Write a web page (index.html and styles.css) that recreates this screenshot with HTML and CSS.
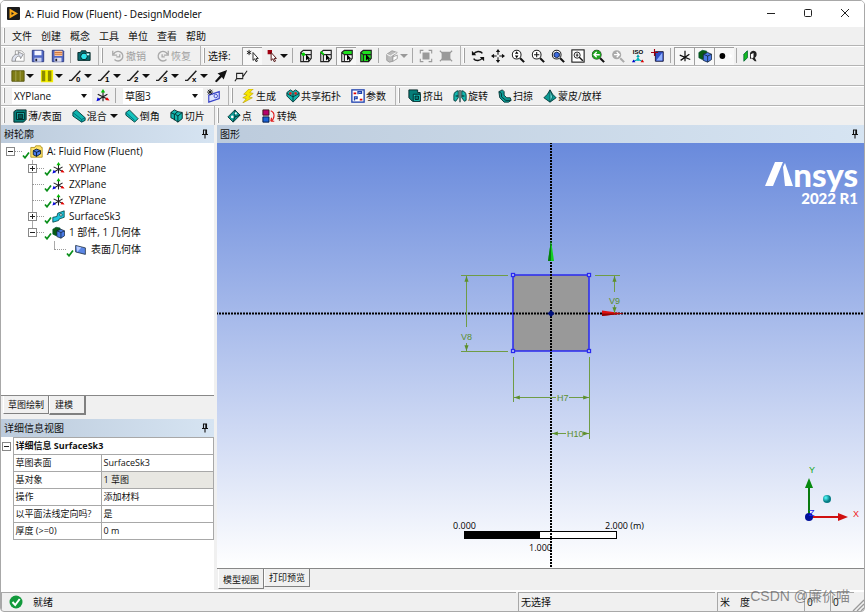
FILE: index.html
```
<!DOCTYPE html>
<html lang="zh-CN">
<head>
    <meta charset="UTF-8">
    <meta name="viewport" content="width=device-width, initial-scale=1.0">
    <title>A: Fluid Flow (Fluent) - DesignModeler</title>
    <link rel="stylesheet" href="styles.css">
</head>
<body>
    <!-- Shared icons -->
    <svg class="sprite" aria-hidden="true">
        <symbol id="i-cube" viewBox="0 0 16 16">
            <path d="M2 4l3-2.500h9v9L11 14.500H2zM2 4l3 2.500V14.500M5 6.500h9" fill="none" stroke="#222" stroke-width="1.300"/>
            <path d="M8 6l0 7 1.800-1.500 1.200 2.500 1-.5-1.200-2.500H13z" fill="#000"/>
        </symbol>
        <symbol id="i-line" viewBox="0 0 16 16">
            <path d="M0 13h3L13 2" fill="none" stroke="#222" stroke-width="1.700"/>
        </symbol>
        <symbol id="i-mag" viewBox="0 0 16 16">
            <circle cx="6.500" cy="6.500" r="5" fill="#fff" stroke="#222" stroke-width="1.200"/>
            <path d="M10.500 10.500L15 15" stroke="#111" stroke-width="2.400"/>
        </symbol>
        <symbol id="i-axes" viewBox="0 0 16 16">
            <path d="M8 14V3M2 6l12 6M13 6L3 12" stroke="#222" stroke-width="1.300"/>
            <path d="M8 0l2.500 4h-5z" fill="#0b0"/>
            <path d="M15.500 13l-5-.5 2-3z" fill="#e00"/>
            <path d="M.5 14l1.500-4.500 3 3z" fill="#00d"/>
        </symbol>
        <symbol id="i-blocks" viewBox="0 0 16 16">
            <path d="M1 4l4-2.500 5 1v7L5 12 1 10z" fill="#0a5c14" stroke="#053" stroke-width=".8"/>
            <path d="M6 6l5-2 4.500 2v6L11 15l-5-2z" fill="#4a7be8" stroke="#123" stroke-width=".9"/>
            <path d="M6 6l5 2v7M11 8l4.500-2" fill="none" stroke="#123" stroke-width=".9"/>
        </symbol>
        <symbol id="i-check" viewBox="0 0 8 8">
            <path d="M1 4.500l2 2.300L7 1.500" fill="none" stroke="#0a8f1a" stroke-width="1.700"/>
        </symbol>
        <symbol id="i-pin" viewBox="0 0 8 10">
            <path d="M2.500 1h3v4.500h-3zM1 5.500h6M4 6v3.500" fill="none" stroke="#111" stroke-width="1.100"/>
            <path d="M5 1v4.500" stroke="#111" stroke-width="1.400"/>
        </symbol>
    </svg>

    <div class="window">
        <header class="titlebar">
            <svg class="app-icon" viewBox="0 0 13 13"><rect width="13" height="13" rx="1" fill="#1b1b1b"/><path d="M2.500 1.500l8.500 5-8.500 5z" fill="#f7a81b"/><path d="M4.500 5l2.500 1.500L4.500 8z" fill="#1b1b1b"/></svg>
            <h1>A: Fluid Flow (Fluent) - DesignModeler</h1>
            <div class="window-buttons">
                <button type="button" aria-label="最小化"><svg viewBox="0 0 10 10"><path d="M1 5.500h8"/></svg></button>
                <button type="button" aria-label="最大化"><svg viewBox="0 0 10 10"><rect x="1.500" y="1.500" width="7" height="7" rx="1"/></svg></button>
                <button type="button" aria-label="关闭"><svg viewBox="0 0 10 10"><path d="M1 1l8 8M9 1L1 9"/></svg></button>
            </div>
        </header>

        <nav class="bar menu">
            <span class="grip"></span>
            <button type="button">文件</button>
            <button type="button">创建</button>
            <button type="button">概念</button>
            <button type="button">工具</button>
            <button type="button">单位</button>
            <button type="button">查看</button>
            <button type="button">帮助</button>
        </nav>

        <div class="bar">
            <div class="group">
                <span class="grip"></span>
                <button type="button" class="tool" aria-label="新建"><svg viewBox="0 0 16 16"><path d="M5 2h7l3 3v9H5z" fill="#fff" stroke="#999"/><path d="M1 14C1 9 4 5 9 6L8 3l6 3-3 5-1-3c-4 0-5 3-5 6z" fill="#dfe3ee" stroke="#777" stroke-width=".8"/></svg></button>
                <button type="button" class="tool" aria-label="保存"><svg viewBox="0 0 16 16"><path d="M1.500 1.500h12l1 1v12h-13z" fill="#5068c4" stroke="#28367e"/><path d="M4 2h8v5H4z" fill="#f4f6ff"/><path d="M4 10h8v4.500H4z" fill="#c9d0ee"/><path d="M5 11h2v3H5z" fill="#223"/></svg></button>
                <button type="button" class="tool" aria-label="另存为"><svg viewBox="0 0 16 16"><path d="M1.500 1.500h12l1 1v12h-13z" fill="#5068c4" stroke="#28367e"/><path d="M4 2h9v6H4z" fill="#ffc89a"/><path d="M4 4h9M4 6h9" stroke="#c66b35"/><path d="M4 10h8v4.500H4z" fill="#dde"/><path d="M5 11h2v3H5z" fill="#223"/></svg></button>
                <span class="sep"></span>
                <button type="button" class="tool" aria-label="截图"><svg viewBox="0 0 16 16"><path d="M1 4h3l1-2h5l1 2h4v9H1z" fill="#0a6a70" stroke="#022"/><circle cx="8" cy="8.500" r="3.800" fill="#2fe3ea" stroke="#011"/><path d="M11 5h3v2h-3z" fill="#dff"/></svg></button>
            </div>
            <div class="group">
                <span class="grip"></span>
                <button type="button" class="tool text" disabled><svg viewBox="0 0 16 16"><path d="M3 6a5.500 5.500 0 1 1 1 6M2 2v5h5M6 9h4V6" fill="none" stroke="#aaa" stroke-width="1.500"/></svg>撤销</button>
                <button type="button" class="tool text" disabled><svg viewBox="0 0 16 16"><path d="M13 6a5.500 5.500 0 1 0-1 6M14 2v5H9M10 9H7V6" fill="none" stroke="#aaa" stroke-width="1.500"/></svg>恢复</button>
            </div>
            <div class="group">
                <span class="grip"></span>
                <span class="caption">选择:</span>
                <button type="button" class="tool pressed" aria-label="单选"><svg viewBox="0 0 16 16"><path d="M3.500 1v6M1 2.500l5 3M6 2.500l-5 3" stroke="#111"/><path d="M8 4v9l2-1.800 1.500 3.300 1.500-.7-1.500-3H14z" fill="#fff" stroke="#111"/></svg></button>
                <button type="button" class="tool drop" aria-label="选择模式"><svg viewBox="0 0 16 16"><path d="M3 1h5v5H3z" fill="#a00010"/><path d="M7 4v9l2-1.800 1.500 3.300 1.500-.7-1.500-3H13z" fill="#fff" stroke="#400"/></svg></button>
                <span class="sep"></span>
                <button type="button" class="tool" aria-label="选择点"><svg viewBox="0 0 16 16"><use href="#i-cube"/><circle cx="5" cy="6" r="2" fill="#0c0"/></svg></button>
                <button type="button" class="tool" aria-label="选择边"><svg viewBox="0 0 16 16"><use href="#i-cube"/><path d="M2 3l3.500 3.500" stroke="#0c0" stroke-width="2"/></svg></button>
                <button type="button" class="tool pressed" aria-label="选择面"><svg viewBox="0 0 16 16"><path d="M2 4l3-2.500h9L14 6.500H5z" fill="#1fe01f"/><use href="#i-cube"/></svg></button>
                <button type="button" class="tool" aria-label="选择体"><svg viewBox="0 0 16 16"><path d="M2 4l3-2.500h9v9L11 14.500H2z" fill="#1fe01f"/><use href="#i-cube"/></svg></button>
                <span class="sep"></span>
                <button type="button" class="tool drop" aria-label="扩展选择" disabled><svg viewBox="0 0 16 16"><path d="M2 6l6-4 6 2-5 4v6l-4 1-3-2z" fill="#bbb" stroke="#999"/><path d="M2 6l4 2 7-4" fill="none" stroke="#fff"/><path d="M9 9l5-2v4l-5 3z" fill="#fff" stroke="#999"/></svg></button>
                <span class="sep"></span>
                <button type="button" class="tool" aria-label="框选" disabled><svg viewBox="0 0 16 16"><path d="M4 4h8v8H4z" fill="#999"/><path d="M1.500 5V1.500H5M11 1.500h3.500V5M14.500 11v3.500H11M5 14.500H1.500V11" fill="none" stroke="#999" stroke-width="1.300"/></svg></button>
                <button type="button" class="tool" aria-label="取消框选" disabled><svg viewBox="0 0 16 16"><path d="M3 3h10v10H3z" fill="#999"/><path d="M1 2l3 3M15 2l-3 3M1 14l3-3M15 14l-3-3" stroke="#999" stroke-width="1.300"/></svg></button>
            </div>
            <div class="group last">
                <span class="grip"></span>
                <button type="button" class="tool" aria-label="旋转"><svg viewBox="0 0 16 16"><path d="M3 6c2-4 8-4 10-1M13 10c-2 4-8 4-10 1" fill="none" stroke="#111" stroke-width="1.700"/><path d="M1 2v5h5zM15 14V9h-5z" fill="#111"/></svg></button>
                <button type="button" class="tool" aria-label="平移"><svg viewBox="0 0 16 16"><path d="M8 2v12M2 8h12" stroke="#111" stroke-width="1.200" stroke-dasharray="4.500 3"/><path d="M8 0l2.500 3.500h-5zM8 16l2.500-3.500h-5zM0 8l3.500-2.500v5zM16 8l-3.500-2.500v5z" fill="#111"/></svg></button>
                <button type="button" class="tool" aria-label="缩放"><svg viewBox="0 0 16 16"><use href="#i-mag"/><path d="M6.500 2.500l2 3h-4zM6.500 10.500l2-3h-4z"/></svg></button>
                <button type="button" class="tool" aria-label="放大"><svg viewBox="0 0 16 16"><use href="#i-mag"/><path d="M3.500 6.500h6M6.500 3.500v6" stroke="#111" stroke-width="1.200"/></svg></button>
                <button type="button" class="tool" aria-label="适合窗口"><svg viewBox="0 0 16 16"><use href="#i-mag"/><path d="M3.500 5l3-1.500 3 1.500v3.500l-3 1.500-3-1.500z" fill="#3c6ae0" stroke="#013"/></svg></button>
                <button type="button" class="tool" aria-label="框选缩放"><svg viewBox="0 0 16 16"><rect x="1" y="1" width="14" height="14" fill="#fff" stroke="#111" stroke-width="1.200"/><circle cx="7" cy="7" r="3.500" fill="none" stroke="#111"/><path d="M9.500 9.500l4 4" stroke="#111" stroke-width="1.700"/><path d="M7 5v4M5.500 7h3" stroke="#111"/></svg></button>
                <button type="button" class="tool" aria-label="上一视图"><svg viewBox="0 0 16 16"><use href="#i-mag"/><circle cx="6.500" cy="6.500" r="5.200" fill="#1fa31f"/><path d="M10 6.500H4M6.500 3.500l-3 3 3 3" fill="none" stroke="#fff" stroke-width="1.600"/></svg></button>
                <button type="button" class="tool" aria-label="下一视图" disabled><svg viewBox="0 0 16 16"><circle cx="6.500" cy="6.500" r="5.200" fill="#aaa"/><path d="M10.500 10.500L15 15" stroke="#aaa" stroke-width="2.400"/><path d="M3.500 6.500h6M6.500 3.500l3 3-3 3" fill="none" stroke="#fff" stroke-width="1.500"/></svg></button>
                <button type="button" class="tool" aria-label="等轴测视图"><svg viewBox="0 0 16 16"><text x="8" y="6" class="iso">ISO</text><path d="M8 8v4M8 12l-5 2M8 12l5 2" stroke="#00a4b0" stroke-width="1.300"/><path d="M8 6l2 3H6z" fill="#00a4b0"/><path d="M1 15l2-3 2 3z" fill="#00c"/><path d="M15 15l-2-3-2 3z" fill="#d00"/><circle cx="8" cy="12" r="1.600" fill="#0bb"/></svg></button>
                <button type="button" class="tool" aria-label="查看面"><svg viewBox="0 0 16 16"><path d="M5 3h9v11H5z" fill="#2f4fc8" stroke="#113"/><path d="M6 13l7-9v9z" fill="#8fb0ff"/><path d="M4 0v8M0 4h8" stroke="#a00010" stroke-width="1.300"/></svg></button>
                <span class="sep"></span>
                <button type="button" class="tool pressed" aria-label="显示轴"><svg viewBox="0 0 16 16"><path d="M8 2v12M2 7l12 5M13 6L3 13" stroke="#111" stroke-width="1.400"/></svg></button>
                <button type="button" class="tool pressed" aria-label="显示模型"><svg viewBox="0 0 16 16"><use href="#i-blocks"/></svg></button>
                <button type="button" class="tool pressed" aria-label="显示点"><svg viewBox="0 0 16 16"><circle cx="5" cy="8" r="3.300" fill="#000"/><circle cx="14" cy="8" r="2" fill="#fff"/></svg></button>
                <span class="sep"></span>
                <button type="button" class="tool" aria-label="注视"><svg viewBox="0 0 16 16"><path d="M1 6l4-4v8l-4 4z" fill="#14c020" stroke="#063"/><path d="M8 5c1-4 7-4 7.500 0 .5 3-1 4-2 5l2 4h-2l-3-3H8V8z" fill="#222"/><path d="M9 6l3-1.500v5L10 11l-1-2z" fill="#fff"/></svg></button>
            </div>
        </div>

        <div class="bar">
            <div class="group last">
                <span class="grip"></span>
                <button type="button" class="tool drop wide" aria-label="面颜色"><svg viewBox="0 0 16 16"><path d="M1 2h14v12H1z" fill="#7e7c16" stroke="#55540c"/><path d="M5.500 2v12M10.500 2v12" stroke="#a9a75a"/></svg></button>
                <button type="button" class="tool drop wide" aria-label="边颜色"><svg viewBox="0 0 16 16"><path d="M1 1h14v14H1z" fill="#f4ef00"/><path d="M2 2h4v12H2zM9 2h4v12H9z" fill="#8d8a00"/></svg></button>
                <button type="button" class="tool drop wide" aria-label="边 0"><svg viewBox="0 0 16 16"><use href="#i-line"/><text x="8" y="15" class="num">0</text></svg></button>
                <button type="button" class="tool drop wide" aria-label="边 1"><svg viewBox="0 0 16 16"><use href="#i-line"/><text x="8" y="15" class="num">1</text></svg></button>
                <button type="button" class="tool drop wide" aria-label="边 2"><svg viewBox="0 0 16 16"><use href="#i-line"/><text x="8" y="15" class="num">2</text></svg></button>
                <button type="button" class="tool drop wide" aria-label="边 3"><svg viewBox="0 0 16 16"><use href="#i-line"/><text x="8" y="15" class="num">3</text></svg></button>
                <button type="button" class="tool drop wide" aria-label="边 X"><svg viewBox="0 0 16 16"><use href="#i-line"/><text x="8" y="15" class="num">x</text></svg></button>
                <button type="button" class="tool" aria-label="边方向"><svg viewBox="0 0 16 16"><path d="M15 1l-4 11-2-3-6 6-2-1 6-7-3-2z" fill="#111"/></svg></button>
                <button type="button" class="tool" aria-label="顶点"><svg viewBox="0 0 16 16"><path d="M3 5h7v6H3zM1 14l2-3M10 9l5-7" fill="none" stroke="#222" stroke-width="1.200"/></svg></button>
            </div>
        </div>

        <div class="bar">
            <div class="group">
                <span class="grip"></span>
                <select class="combo" aria-label="平面"><option>XYPlane</option></select>
                <button type="button" class="tool" aria-label="新平面"><svg viewBox="0 0 16 16"><use href="#i-axes"/></svg></button>
                <span class="sep"></span>
                <select class="combo" aria-label="草图"><option>草图3</option></select>
                <button type="button" class="tool" aria-label="新草图"><svg viewBox="0 0 16 16"><path d="M2 7l12-4v8L2 15z" fill="#dfe4ff" stroke="#3742c8" stroke-width="1.300"/><circle cx="10" cy="8" r="2" fill="none" stroke="#3742c8"/><path d="M3.500 0v7M0 3.500h7M1 1l5 5M6 1L1 6" stroke="#111"/></svg></button>
            </div>
            <div class="group labelled">
                <span class="grip"></span>
                <button type="button" class="tool text"><svg viewBox="0 0 16 16"><path d="M9 0L3 6l4 1-5 3 4 1-4 5 11-6-4-1 5-4-4-1 4-4z" fill="#f7e600" stroke="#b79a00" stroke-width=".7"/></svg>生成</button>
                <button type="button" class="tool text"><svg viewBox="0 0 16 16"><path d="M1 4l4-3 3 2 3-2 4 3v4l-7 7-7-7z" fill="#14b5ae" stroke="#033"/><path d="M8 4v10M1 5l7 4 7-4" fill="none" stroke="#033"/><circle cx="5" cy="5" r="1.500" fill="#d22"/><circle cx="11" cy="5" r="1.500" fill="#d22"/></svg>共享拓扑</button>
                <button type="button" class="tool text"><svg viewBox="0 0 16 16"><rect x="1" y="1" width="14" height="14" fill="#fff" stroke="#1d3fae" stroke-width="1.500"/><path d="M3 5h3M10 12h3" stroke="#d00" stroke-width="2"/><path d="M8 6V3h4v2H9M4 13v-4h3v2H5" fill="none" stroke="#1d3fae" stroke-width="1.500"/></svg>参数</button>
            </div>
            <div class="group labelled last">
                <span class="grip"></span>
                <button type="button" class="tool text"><svg viewBox="0 0 16 16"><path d="M1 1h10v3h3v10H5l-4-4z" fill="#067d78" stroke="#022"/><path d="M6 6h8v8H6z" fill="#18cfc6" stroke="#022"/><path d="M8 8h4v4H8z" fill="#067d78" stroke="#022"/></svg>挤出</button>
                <button type="button" class="tool text"><svg viewBox="0 0 16 16"><path d="M1 13V7c0-3 3-5 5-5v8l-3 4zM15 13V7c0-3-3-5-5-5v8l3 4z" fill="#14b5ae" stroke="#033"/><path d="M8 1v14M3 8h3M10 8h3" stroke="#022" stroke-width="1.300"/></svg>旋转</button>
                <button type="button" class="tool text"><svg viewBox="0 0 16 16"><path d="M1 3l4-2 2 2v4l3 3h4l1 3-3 2H7l-5-5z" fill="#0c9b95" stroke="#033"/><path d="M1 3l3 2v4l5 4h6" fill="none" stroke="#033"/></svg>扫掠</button>
                <button type="button" class="tool text"><svg viewBox="0 0 16 16"><path d="M8 1l3 5 4 4-7 5-7-5 4-4z" fill="#0c9b95" stroke="#033"/><path d="M8 1v14l3-6z" fill="#5fe0da" stroke="#033" stroke-width=".7"/></svg>蒙皮/放样</button>
            </div>
        </div>

        <div class="bar bottom">
            <div class="group labelled">
                <span class="grip"></span>
                <button type="button" class="tool text"><svg viewBox="0 0 16 16"><path d="M1 3l3-2h11v11l-3 3H1z" fill="#067d78" stroke="#022"/><path d="M4 4h9v8H4z" fill="#18b5ae" stroke="#022"/><path d="M6 6h5v5H6z" fill="#0a5550" stroke="#022"/></svg>薄/表面</button>
                <button type="button" class="tool text menu-drop"><svg viewBox="0 0 16 16"><path d="M1 4l4-3 10 9v3l-4 2L1 8z" fill="#0fb3ac" stroke="#033"/><path d="M1 4l10 8v3M11 12l4-2" fill="none" stroke="#067"/></svg>混合</button>
                <button type="button" class="tool text"><svg viewBox="0 0 16 16"><path d="M1 4l4-3 10 10-4 4L1 7z" fill="#14c4bd" stroke="#033"/><path d="M1 4l10 9" fill="none" stroke="#067"/></svg>倒角</button>
                <button type="button" class="tool text"><svg viewBox="0 0 16 16"><path d="M1 4l4-3 4 2 5 1v7l-5 4-4-3-4-2z" fill="#14b5ae" stroke="#022"/><path d="M1 4l4 2v7M5 6l4-3M9 15V8l5-4M6 6l3 2" fill="none" stroke="#022"/></svg>切片</button>
            </div>
            <div class="group labelled last">
                <span class="grip"></span>
                <button type="button" class="tool text"><svg viewBox="0 0 16 16"><path d="M1 9l8-8 6 6-8 8z" fill="#0c9b95" stroke="#033"/><path d="M9 1v8l6-2M9 9l-2 6" fill="none" stroke="#033"/><circle cx="6" cy="9" r="1.500" fill="#fff"/><circle cx="10" cy="5" r="1.200" fill="#fff"/></svg>点</button>
                <button type="button" class="tool text"><svg viewBox="0 0 16 16"><path d="M1 1h7v6H1z" fill="#b8006c" stroke="#311"/><path d="M1 9h7v6H1z" fill="#1a62d8" stroke="#013"/><path d="M10 2c5 2 5 9 0 12M10 14l1-4M10 14l4 0" fill="none" stroke="#e02020" stroke-width="1.300"/></svg>转换</button>
            </div>
        </div>

        <main class="workspace">
            <aside class="side">
                <div class="pane-title"><h2>树轮廓</h2><svg class="pin"><use href="#i-pin"/></svg></div>
                <div class="tree">
                    <ul>
                        <li>
                            <div class="node"><button type="button" class="twisty" aria-label="折叠"></button><span class="dash"></span><svg class="tick"><use href="#i-check"/></svg><svg class="node-icon" viewBox="0 0 16 16"><path d="M1 3h5l1-2h6l1 2h1v12H1z" fill="#ffe36b" stroke="#a88a10"/><path d="M4 7l4-2 5 2v4l-5 3-4-2z" fill="#4a7be8" stroke="#012"/><path d="M4 7l4 2 5-2M8 9v5" fill="none" stroke="#012"/></svg>A: Fluid Flow (Fluent)</div>
                            <ul>
                                <li><div class="node"><button type="button" class="twisty plus" aria-label="展开"></button><span class="dash"></span><svg class="tick"><use href="#i-check"/></svg><svg class="node-icon"><use href="#i-axes"/></svg>XYPlane</div></li>
                                <li><div class="node"><span class="dash long"></span><svg class="tick"><use href="#i-check"/></svg><svg class="node-icon"><use href="#i-axes"/></svg>ZXPlane</div></li>
                                <li><div class="node"><span class="dash long"></span><svg class="tick"><use href="#i-check"/></svg><svg class="node-icon"><use href="#i-axes"/></svg>YZPlane</div></li>
                                <li><div class="node"><button type="button" class="twisty plus" aria-label="展开"></button><span class="dash"></span><svg class="tick"><use href="#i-check"/></svg><svg class="node-icon" viewBox="0 0 16 16"><path d="M1 9l5-1 1-4 8-3v8l-6 2-1 2-7 2z" fill="#1fc4dc" stroke="#044"/><circle cx="11" cy="6" r="1.600" fill="#fff" stroke="#044"/></svg>SurfaceSk3</div></li>
                                <li>
                                    <div class="node"><button type="button" class="twisty" aria-label="折叠"></button><span class="dash"></span><svg class="tick"><use href="#i-check"/></svg><svg class="node-icon"><use href="#i-blocks"/></svg>1 部件, 1 几何体</div>
                                    <ul>
                                        <li><div class="node"><span class="dash long"></span><svg class="tick"><use href="#i-check"/></svg><svg class="node-icon" viewBox="0 0 16 16"><path d="M2 3l12 3v8L2 11z" fill="#5b86e6" stroke="#234"/><path d="M3 4l6 1.500L4 11z" fill="#b8ccff"/></svg>表面几何体</div></li>
                                    </ul>
                                </li>
                            </ul>
                        </li>
                    </ul>
                </div>
                <div class="tabs side-tabs">
                    <button type="button" class="tab">草图绘制</button>
                    <button type="button" class="tab active">建模</button>
                </div>
                <div class="pane-title"><h2>详细信息视图</h2><svg class="pin"><use href="#i-pin"/></svg></div>
                <div class="details">
                    <table>
                        <colgroup><col class="col-gutter"><col class="col-name"><col></colgroup>
                        <thead>
                            <tr><td class="gutter"><button type="button" class="twisty" aria-label="折叠"></button></td><th colspan="2">详细信息 SurfaceSk3</th></tr>
                        </thead>
                        <tbody>
                            <tr><td class="gutter"></td><th>草图表面</th><td>SurfaceSk3</td></tr>
                            <tr><td class="gutter"></td><th>基对象</th><td class="readonly">1 草图</td></tr>
                            <tr><td class="gutter"></td><th>操作</th><td>添加材料</td></tr>
                            <tr><td class="gutter"></td><th>以平面法线定向吗?</th><td>是</td></tr>
                            <tr><td class="gutter"></td><th>厚度 (&gt;=0)</th><td>0 m</td></tr>
                        </tbody>
                    </table>
                </div>
            </aside>

            <section class="view">
                <div class="pane-title"><h2>图形</h2><svg class="pin"><use href="#i-pin"/></svg></div>
                <div class="canvas">
                    <svg class="scene" viewBox="0 0 647 425">
                        <defs>
                            <marker id="arrow" viewBox="0 0 7 6" refX="7" refY="3" markerWidth="6" markerHeight="5" orient="auto-start-reverse"><path d="M0 0.500L7 3 0 5.500z" fill="#5c8f2c"/></marker>
                            <radialGradient id="ball" cx=".35" cy=".35"><stop offset="0" stop-color="#5ff"/><stop offset="1" stop-color="#067c84"/></radialGradient>
                        </defs>
                        <rect x="296" y="132" width="76" height="76" fill="#999" stroke="#2a2af0" stroke-width="1.500"/>
                        <path class="axis" d="M-400 170.500H1000M334 -400V900"/>
                        <g fill="#c8d4f8" stroke="#2a2af0" stroke-width="1.300">
                            <rect x="294.500" y="130.500" width="3" height="3"/><rect x="370.500" y="130.500" width="3" height="3"/>
                            <rect x="294.500" y="206.500" width="3" height="3"/><rect x="370.500" y="206.500" width="3" height="3"/>
                        </g>
                        <path d="M334 167l3.500 3.500-3.500 3.500-3.500-3.500z" fill="#00107a"/>
                        <path d="M334 97l3 21h-6z" fill="#10d020"/><path d="M334 97v21h-3z" fill="#067a10"/>
                        <path d="M385 167.500l22 3-22 2.500z" fill="#e01010"/><path d="M385 170.500h22l-22 2.500z" fill="#8c0606"/>

                        <g class="dim">
                            <path d="M244 132.500h47M244 208.500h47M378 132.500h25"/>
                            <path d="M296.500 214v45M372.500 214v82"/>
                            <path d="M249.500 184V133" marker-end="url(#arrow)"/><path d="M249.500 200V208" marker-end="url(#arrow)"/>
                            <path d="M397.500 149V133" marker-end="url(#arrow)"/><path d="M397.500 162V170" marker-end="url(#arrow)"/>
                            <path d="M339 254.500H297" marker-end="url(#arrow)"/><path d="M352 254.500H372" marker-end="url(#arrow)"/>
                            <path d="M349 290.500H335" marker-end="url(#arrow)"/><path d="M366 290.500H372" marker-end="url(#arrow)"/>
                        </g>
                        <g class="dim-text">
                            <text x="244" y="197">V8</text><text x="392" y="161">V9</text>
                            <text x="340" y="258">H7</text><text x="350" y="294">H10</text>
                        </g>

                        <g class="ruler">
                            <rect x="247.500" y="388.500" width="152" height="7" fill="#fff" stroke="#000"/>
                            <rect x="247" y="388" width="76" height="8"/>
                            <path class="axis" d="M334 387v10"/>
                            <text x="236" y="386">0.000</text><text x="388" y="386">2.000 (m)</text><text x="312" y="408">1.000</text>
                        </g>

                        <g class="triad">
                            <path d="M592 374V344" stroke="#0a7a10" stroke-width="2"/><path d="M592 335l4 10h-8z" fill="#078a10"/>
                            <path d="M592 374h30" stroke="#d01010" stroke-width="2"/><path d="M631 374l-10 4v-8z" fill="#d01010"/>
                            <circle cx="592" cy="374" r="4" fill="#00109a"/><circle cx="610" cy="356" r="4" fill="url(#ball)"/>
                            <text x="592" y="330" fill="#12a81c">Y</text><text x="636" y="374" fill="#f02020">X</text><text x="592" y="373" fill="#2020f0">Z</text>
                        </g>
                    </svg>
                    <div class="logo">
                        <div class="brand"><svg viewBox="0 0 28 26"><path d="M10 1h8L8 25H0z"/><path d="M18 6l2-4 8 23h-8z"/></svg><span>nsys</span></div>
                        <div class="release">2022 R1</div>
                    </div>
                </div>
                <div class="tabs view-tabs">
                    <button type="button" class="tab active">模型视图</button>
                    <button type="button" class="tab">打印预览</button>
                </div>
            </section>
        </main>

        <footer class="status">
            <div class="cell state"><svg viewBox="0 0 14 14"><circle cx="7" cy="7" r="6.500" fill="#129a3c"/><path d="M3.500 7l2.700 3 4.500-6" fill="none" stroke="#fff" stroke-width="2"/></svg>就绪</div>
            <div class="cell selection">无选择</div>
            <div class="cell units"><span>米</span><span>度</span></div>
            <div class="cell value">0</div>
            <div class="cell value">0</div>
            <svg class="resize" viewBox="0 0 12 12"><path d="M1 12L12 1M5 12l7-7M9 12l3-3" stroke="#999" stroke-width="1.300"/></svg>
            <span class="watermark">CSDN @廉价喵</span>
        </footer>
    </div>
</body>
</html>
```
FILE: styles.css
```
* {
    box-sizing: border-box;
}
body {
    margin: 0;
    background-color: #fff;
    color: #111;
    font-family: "Open Sans", "Noto Sans CJK SC", sans-serif;
    font-size: 10px;
    line-height: 14px;
}
button, select {
    font: inherit;
    color: inherit;
    background: none;
    border: 0;
    border-radius: 0;
    padding: 0;
    margin: 0;
}
h1, h2 {
    margin: 0;
    font-size: 10px;
    font-weight: normal;
}
ul {
    list-style: none;
    margin: 0;
    padding: 0;
}
.sprite {
    display: none;
}
.window {
    display: flex;
    flex-direction: column;
    height: 100vh;
    background-color: #f0f0f0;
    border: 1px solid #a8a8a8;
    border-radius: 5px 5px 4px 4px;
    overflow: hidden;
}

/* Title bar */
.titlebar {
    display: flex;
    align-items: center;
    height: 25px;
    flex: none;
    padding-left: 6px;
    background-color: #fff;
}
.titlebar h1 {
    flex: 1;
    margin-left: 5px;
    font-family: "Noto Sans", sans-serif;
}
.app-icon {
    width: 13px;
    height: 13px;
}
.window-buttons {
    display: flex;
    padding-right: 1px;
}
.window-buttons button {
    width: 37px;
    height: 24px;
}
.window-buttons svg {
    width: 10px;
    height: 10px;
    fill: none;
    stroke: #222;
}

/* Tool bars */
.bar {
    display: flex;
    flex: none;
    height: 20px;
    border-bottom: 1px solid #b4b4b4;
    box-shadow: inset 0 1px #fff;
}
.bar.bottom {
    height: 19px;
    border-bottom: 0;
}
.menu {
    align-items: center;
    gap: 9px;
}
.menu .grip {
    margin-right: -2px;
}
.group {
    display: flex;
    align-items: center;
    padding-right: 4px;
    border-right: 1px solid #b4b4b4;
}
.group.last {
    border-right: 0;
}
.grip {
    width: 2px;
    height: 15px;
    margin: 0 3px 0 2px;
    border-left: 1px solid #fff;
    border-right: 1px solid #a0a0a0;
    flex: none;
}
.sep {
    width: 1px;
    height: 15px;
    margin: 0 3px 0 2px;
    background-color: #a8a8a8;
}
.tool {
    display: flex;
    align-items: center;
    justify-content: center;
    width: 20px;
    height: 18px;
    flex: none;
}
.tool svg {
    width: 14px;
    height: 14px;
    flex: none;
}
.tool:disabled {
    color: #a0a0a0;
}
.tool.pressed {
    background-color: #f8f8f8;
    border-left: 1px solid #a0a0a0;
    border-top: 1px solid #a0a0a0;
}
.tool.text {
    width: auto;
    padding: 0 5px;
    gap: 1px;
}
.tool.drop {
    width: 28px;
    gap: 1px;
}
.tool.wide {
    width: 29px;
}
.drop::after, .menu-drop::after {
    content: "";
    border: 4px solid transparent;
    border-top-color: #111;
    border-bottom: 0;
}
.drop:disabled::after {
    border-top-color: #999;
}
.tool.menu-drop {
    padding-right: 2px;
}
.menu-drop::after {
    margin-left: 2px;
}
.caption {
    width: 34px;
}
.combo {
    appearance: none;
    width: 80px;
    height: 16px;
    margin: 0 1px 0 4px;
    padding-left: 2px;
    background: #fff url("data:image/svg+xml,%3Csvg xmlns='http://www.w3.org/2000/svg' width='6' height='4'%3E%3Cpath d='M0 0h6L3 4z' fill='%23111'/%3E%3C/svg%3E") no-repeat right 5px center;
}
.iso {
    font: bold 7px "Liberation Sans", sans-serif;
    text-anchor: middle;
}
.num {
    font: bold 9px "Liberation Sans", sans-serif;
}

/* Panels */
.workspace {
    display: flex;
    gap: 3px;
    flex: 1;
    min-height: 0;
}
.side {
    display: flex;
    flex-direction: column;
    width: 213px;
    flex: none;
    background-color: #fff;
}
.pane-title {
    display: flex;
    align-items: center;
    justify-content: space-between;
    height: 18px;
    flex: none;
    padding: 0 5px 0 3px;
    background: linear-gradient(to right, #bccbdc, #d6e4f2);
}
.pin {
    width: 8px;
    height: 10px;
}
.tree {
    flex: 1;
    min-height: 0;
    padding-left: 5px;
}
.tree ul ul {
    margin-left: 22px;
    padding-top: 1px;
}
.node {
    display: flex;
    align-items: center;
    height: 16px;
    white-space: nowrap;
}
.twisty {
    width: 9px;
    height: 9px;
    flex: none;
    border: 1px solid #888;
    background: linear-gradient(#222, #222) center / 5px 1px no-repeat #fff;
}
.twisty.plus {
    background: linear-gradient(#222, #222) center / 5px 1px no-repeat, linear-gradient(#222, #222) center / 1px 5px no-repeat #fff;
}
.dash {
    width: 7px;
    border-top: 1px dotted #999;
    flex: none;
}
.dash.long {
    width: 12px;
    margin-left: 4px;
}
.tree ul ul > li {
    background: linear-gradient(#aaa, #aaa) 4px 0 / 1px 100% no-repeat;
}
.tree ul ul > li:last-child {
    background-size: 1px 8px;
}
.tick {
    width: 8px;
    height: 8px;
    margin-top: 7px;
    flex: none;
}
.node-icon {
    width: 13px;
    height: 13px;
    margin-right: 4px;
    flex: none;
}
.tabs {
    display: flex;
    align-items: flex-start;
    flex: none;
    background-color: #f0f0f0;
    border-top: 1px solid #888;
}
.tab {
    height: 18px;
    padding: 0 4px;
    border: 1px solid #808080;
    border-top: 0;
    border-left-color: #fff;
    font-size: 9px;
    white-space: nowrap;
}
.side-tabs {
    height: 24px;
    padding-left: 2px;
}
.side-tabs .active {
    height: 19px;
    padding: 1px 11px 0 5px;
    border-width: 0 2px 2px 1px;
}
.details {
    height: 153px;
    font-size: 9px;
}
.details table {
    width: 100%;
    border-collapse: collapse;
    table-layout: fixed;
}
.details tr {
    height: 17px;
}
.details th, .details td {
    padding: 0 2px;
    border: 1px solid #a8a8a8;
    font-weight: normal;
    text-align: left;
    white-space: nowrap;
}
.details thead th {
    font-weight: bold;
}
.col-gutter {
    width: 12px;
}
.col-name {
    width: 88px;
}
.details .gutter {
    padding: 0 1px;
    border: 0;
    line-height: 0;
}
.details .readonly {
    background-color: #e8e7e2;
}

/* Graphics view */
.view {
    display: flex;
    flex-direction: column;
    flex: 1;
    min-width: 0;
}
.canvas {
    position: relative;
    flex: 1;
    min-height: 0;
    background: linear-gradient(#698adc, #fff);
    overflow: hidden;
}
.scene {
    display: block;
    width: 100%;
    height: 100%;
    overflow: visible;
}
.axis {
    stroke: #000;
    stroke-width: 2;
    stroke-dasharray: 2 1;
}
.dim {
    fill: none;
    stroke: #6f9c45;
}
.dim-text {
    font: 9px "Liberation Sans", sans-serif;
    fill: #5c8f2c;
}
.ruler text {
    font: 9px "Open Sans", sans-serif;
}
.triad text {
    font: 9px "Liberation Sans", sans-serif;
}
.logo {
    position: absolute;
    top: 15px;
    right: 6px;
    color: #fff;
    font-family: Lato, sans-serif;
    text-align: right;
}
.brand {
    display: flex;
    align-items: center;
    font-size: 33px;
    font-weight: 900;
    line-height: 32px;
}
.brand svg {
    width: 28px;
    height: 26px;
    fill: #fff;
}
.release {
    font-size: 15px;
    font-weight: 900;
    line-height: 17px;
}
.view-tabs {
    height: 22px;
    padding-left: 1px;
}
.view-tabs .active {
    height: 20px;
    padding-top: 2px;
}

/* Status bar */
.status {
    position: relative;
    display: flex;
    gap: 2px;
    height: 21px;
    flex: none;
    padding-right: 10px;
    border-top: 2px solid #fff;
}
.cell {
    display: flex;
    align-items: center;
    padding-left: 2px;
    border-left: 1px solid #a8a8a8;
    border-top: 1px solid #a8a8a8;
}
.state {
    flex: 1;
    gap: 10px;
    padding-left: 7px;
}
.state svg {
    width: 14px;
    height: 14px;
}
.selection {
    width: 197px;
}
.units {
    width: 85px;
    gap: 10px;
}
.value {
    width: 24px;
}
.resize {
    position: absolute;
    right: 0;
    bottom: 0;
    width: 12px;
    height: 12px;
}
.watermark {
    position: absolute;
    right: 14px;
    top: -6px;
    font-family: "Liberation Sans", "Noto Sans CJK SC", sans-serif;
    font-size: 14px;
    line-height: 20px;
    color: rgba(90, 90, 90, 0.7);
}
```
